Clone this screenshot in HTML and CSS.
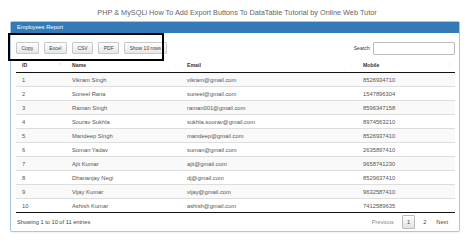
FILE: index.html
```html
<!DOCTYPE html>
<html>
<head>
<meta charset="utf-8">
<link rel="stylesheet" href="styles.css">
</head>
<body>
<h3 class="title">PHP &amp; MySQLi How To Add Export Buttons To DataTable Tutorial by Online Web Tutor</h3>
<div class="panel">
  <div class="panel-heading">Employees Report</div>
  <div class="panel-body">
    <div class="toolbar">
      <div class="buttons">
        <span class="btn">Copy</span>
        <span class="btn">Excel</span>
        <span class="btn">CSV</span>
        <span class="btn">PDF</span>
        <span class="btn">Show 10 rows</span>
      </div>
      <label class="search">Search: <span class="search-input"></span></label>
      <div class="highlight"></div>
    </div>
    <table class="grid">
      <thead>
        <tr>
          <th class="c-id">ID<span class="sort up">↑</span></th>
          <th class="c-name">Name<span class="sort">↕</span></th>
          <th class="c-email">Email<span class="sort">↕</span></th>
          <th class="c-mobile">Mobile<span class="sort">↕</span></th>
        </tr>
      </thead>
      <tbody>
        <tr><td>1</td><td>Vikram Singh</td><td>vikram@gmail.com</td><td>8526934710</td></tr>
        <tr><td>2</td><td>Suneel Rana</td><td>suneel@gmail.com</td><td>1547896304</td></tr>
        <tr><td>3</td><td>Raman Singh</td><td>raman001@gmail.com</td><td>8596347158</td></tr>
        <tr><td>4</td><td>Sourav Sukhla</td><td>sukhla.sourav@gmail.com</td><td>8974563210</td></tr>
        <tr><td>5</td><td>Mandeep Singh</td><td>mandeep@gmail.com</td><td>8526937410</td></tr>
        <tr><td>6</td><td>Suman Yadav</td><td>suman@gmail.com</td><td>2635897410</td></tr>
        <tr><td>7</td><td>Ajit Kumar</td><td>ajit@gmail.com</td><td>9658741230</td></tr>
        <tr><td>8</td><td>Dhananjay Negi</td><td>dj@gmail.com</td><td>8529637410</td></tr>
        <tr><td>9</td><td>Vijay Kumar</td><td>vijay@gmail.com</td><td>9632587410</td></tr>
        <tr><td>10</td><td>Ashish Kumar</td><td>ashish@gmail.com</td><td>7412589635</td></tr>
      </tbody>
    </table>
    <div class="footer">
      <span class="info">Showing 1 to 10 of 11 entries</span>
      <div class="pager">
        <span class="pg muted">Previous</span>
        <span class="pg current">1</span>
        <span class="pg">2</span>
        <span class="pg">Next</span>
      </div>
    </div>
  </div>
</div>
</body>
</html>
```
FILE: styles.css
```css
html, body { margin: 0; padding: 0; background: #fff; }
body {
  font-family: "Liberation Sans", Arial, sans-serif;
  color: #333;
  width: 474px;
  height: 249px;
  overflow: hidden;
}
.title {
  margin: 0;
  padding-top: 8px;
  height: 13px;
  font-size: 7.3px;
  font-weight: normal;
  text-align: center;
  color: #666;
  line-height: 10px;
}
.panel {
  margin: 0 14px 0 10px;
  border: 1px solid #a9c6e0;
  border-radius: 2px;
  box-shadow: 0 1px 1px rgba(0,0,0,0.05);
}
.panel-heading {
  background: #337ab7;
  color: #fff;
  font-size: 5.6px;
  height: 11px;
  line-height: 11px;
  padding-left: 6px;
}
.panel-body {
  padding: 9px 4px 1px 5px;
}
.toolbar {
  position: relative;
  display: flex;
  justify-content: space-between;
  align-items: center;
  height: 12px;
}
.buttons { display: flex; gap: 5px; }
.btn {
  font-size: 5px;
  height: 10px;
  line-height: 10px;
  padding: 0 4.5px;
  border: 1px solid #c8c8c8;
  border-radius: 1px;
  background: linear-gradient(#fff, #e6e6e6);
  color: #444;
}
.search { font-size: 5px; display: flex; align-items: center; gap: 2px; color: #333; }
.search-input {
  display: block;
  width: 80px;
  height: 11px;
  border: 1px solid #bbb;
  border-radius: 1px;
  background: #fff;
}
.highlight {
  position: absolute;
  left: -8px;
  top: -9px;
  width: 152px;
  height: 24px;
  border: 2px solid #000;
}
.grid {
  width: 439px;
  margin-top: 3px;
  border-collapse: collapse;
  font-size: 5.8px;
  color: #555;
}
.grid th {
  text-align: left;
  font-weight: bold;
  height: 15px;
  padding: 0 0 0 6px;
  border-bottom: 1px solid #111;
  position: relative;
  font-size: 5.2px;
  color: #333;
}
.sort {
  position: absolute;
  right: 4px;
  top: 5px;
  color: #cfcfcf;
  font-size: 4.6px;
  font-weight: normal;
}
.sort.up { color: #888; right: 5px; }
.c-id { width: 44px; }
.c-name { width: 109px; }
.c-email { width: 170px; }
.grid td {
  height: 13px;
  padding: 0 0 0 6px;
  border-top: 1px solid #ddd;
}
.grid tbody tr:first-child td { border-top: none; }
.grid tbody tr:nth-child(odd) { background: #f9f9f9; }
.grid tbody tr:last-child td { border-bottom: 1px solid #111; }
.footer {
  display: flex;
  justify-content: space-between;
  align-items: center;
  height: 17px;
  font-size: 5.7px;
  color: #444;
}
.info { padding-left: 1px; }
.pager { display: flex; align-items: center; gap: 0; padding-right: 2px; }
.pg {
  padding: 0 5px;
  height: 12px;
  line-height: 12px;
  color: #444;
}
.pg.muted { color: #888; }
.pg.current {
  border: 1px solid #bbb;
  border-radius: 1px;
  background: linear-gradient(#fff, #e0e0e0);
  padding: 0 4px;
  margin: 0 3px;
}
```
